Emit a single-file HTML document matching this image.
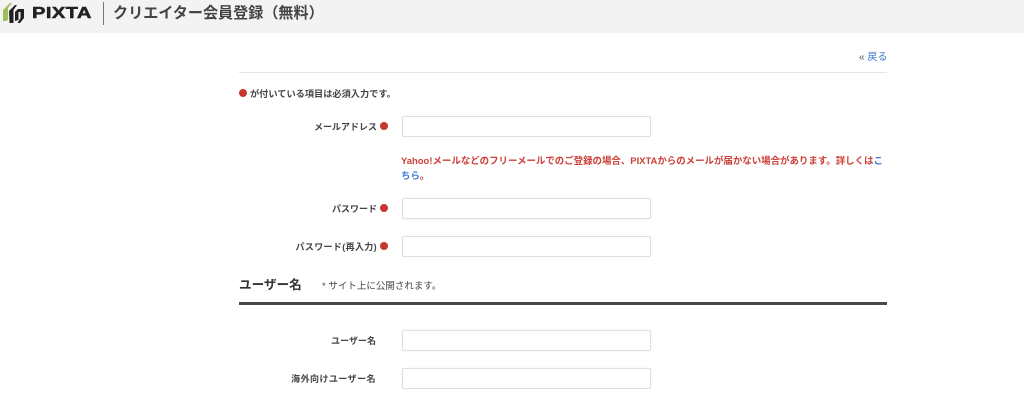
<!DOCTYPE html>
<html lang="ja"><head><meta charset="utf-8"><title>クリエイター会員登録（無料）</title>
<style>
html,body{margin:0;padding:0;background:#fff}
body{width:1024px;height:404px;overflow:hidden;position:relative;font-family:"Liberation Sans","Noto Sans CJK JP",sans-serif;color:#444;filter:blur(.3px)}
.a{position:absolute;white-space:nowrap}
.hd{left:0;top:0;width:1024px;height:33px;background:#f3f3f3}
.l{font-size:9px;font-weight:700;line-height:14px;text-align:right;color:#444}
.in{position:absolute;left:402px;width:247px;height:19px;background:#fff;border:1px solid #e0e0e0;border-radius:2px;box-shadow:0 0 1px #ddd}
.dot{position:absolute;width:8px;height:8px;border-radius:50%;background:#c8362e}
</style></head><body>
<div class="a hd"></div>
<svg class="a" style="left:3px;top:2px" width="22" height="22" viewBox="0 0 22 22">
<path d="M0 8 L7 1 H9 L5 6 V18 L3 19 H0Z" fill="#9dbf5c"/>
<path d="M6 9 L12 3 H14 L10.500 8 V21 H6.500Z" fill="#222"/>
<path d="M12 10 L15 7 H21 V16 L17 21 H14.500 L17.500 16 V10 H15.500 V18 L12 19Z" fill="#222"/>
</svg>
<div class="a" style="left:32px;top:4px;font:700 15.500px/20px 'Liberation Sans',sans-serif;color:#222;letter-spacing:.3px;-webkit-text-stroke:.5px #222;transform:scaleX(1.3);transform-origin:0 50%">PIXTA</div>
<div class="a" style="left:103px;top:2px;width:1px;height:23px;background:#777"></div>
<div class="a" style="left:113px;top:4px;font-size:15.100px;font-weight:700;line-height:20px;color:#444">クリエイター会員登録（無料）</div>

<div class="a" style="left:859px;top:51px;font-size:10px;line-height:14px"><span style="color:#555">«</span> <span style="color:#3a78c8">戻る</span></div>
<div class="a" style="left:239px;top:72px;width:648px;height:1px;background:#e4e4e4"></div>

<div class="dot" style="left:239px;top:89px"></div>
<div class="a" style="left:250px;top:87px;font-size:9.200px;font-weight:700;line-height:14px">が付いている項目は必須入力です。</div>

<div class="a l" style="right:647px;top:120px">メールアドレス</div><div class="dot" style="left:380px;top:122px"></div>
<div class="in" style="top:116px"></div>

<div class="a" style="left:401px;top:155px;font-size:9.450px;font-weight:700;line-height:14.500px;color:#cc4038">Yahoo!メールなどのフリーメールでのご登録の場合、PIXTAからのメールが届かない場合があります。詳しくは<span style="color:#3a78d0">こ<br>ちら</span>。</div>

<div class="a l" style="right:647px;top:202px">パスワード</div><div class="dot" style="left:380px;top:204px"></div>
<div class="in" style="top:198px"></div>

<div class="a l" style="right:647px;top:240px;letter-spacing:.35px">パスワード(再入力)</div><div class="dot" style="left:380px;top:242px"></div>
<div class="in" style="top:236px"></div>

<div class="a" style="left:239px;top:276px;font-size:12.600px;font-weight:700;line-height:18px;color:#333">ユーザー名</div>
<div class="a" style="left:322px;top:280px;font-size:9.500px;line-height:14px;color:#444">* サイト上に公開されます。</div>
<div class="a" style="left:239px;top:302px;width:648px;height:3px;background:#484848"></div>

<div class="a l" style="right:648px;top:334px">ユーザー名</div>
<div class="in" style="top:330px"></div>
<div class="a l" style="right:648px;top:372px;letter-spacing:.45px">海外向けユーザー名</div>
<div class="in" style="top:368px"></div>
</body></html>
